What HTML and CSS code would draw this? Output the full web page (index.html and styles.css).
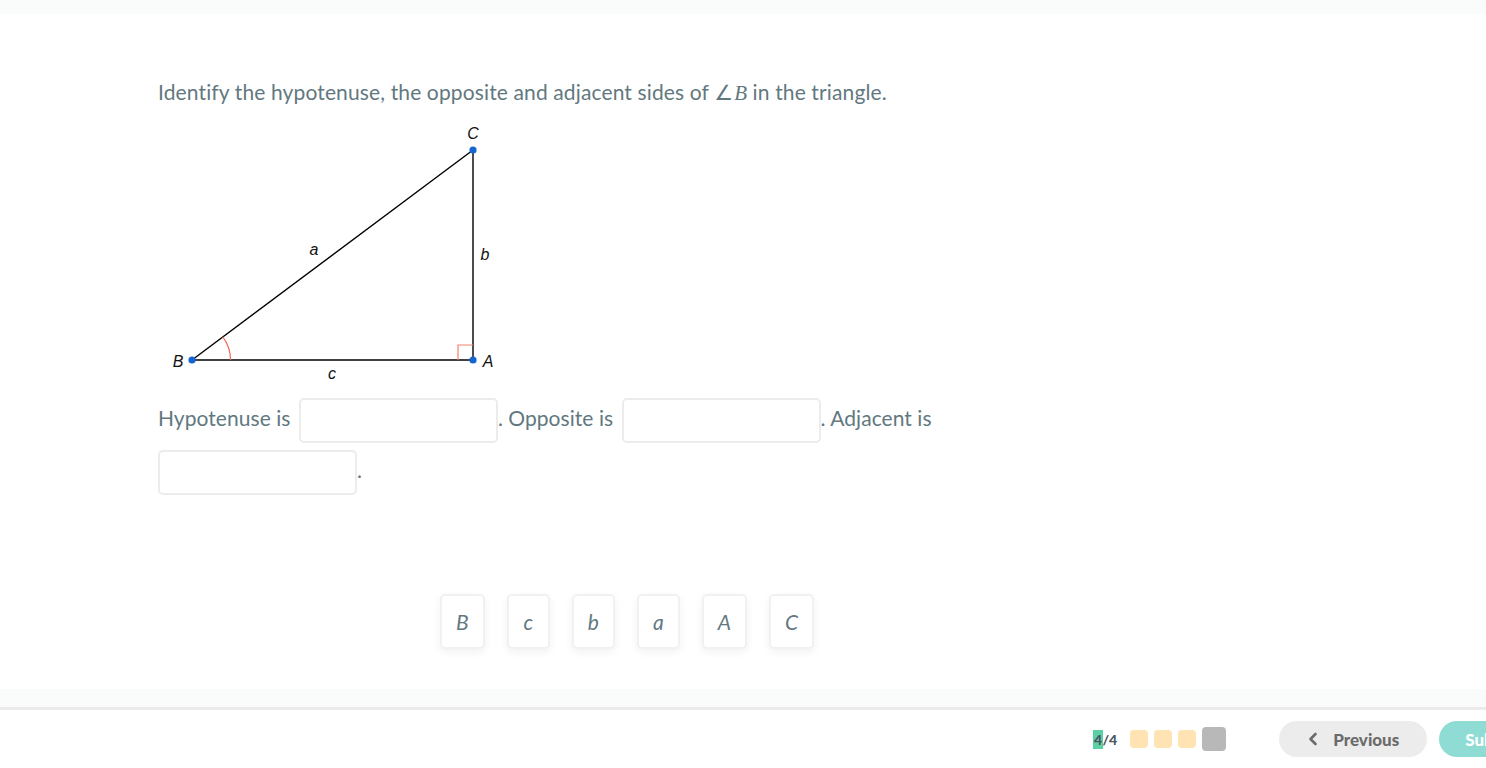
FILE: index.html
```html
<!DOCTYPE html>
<html>
<head>
<meta charset="utf-8">
<link rel="stylesheet" href="styles.css">
</head>
<body>
<div class="topbar"></div>
<main class="content">
  <p class="question">Identify the hypotenuse, the opposite and adjacent sides of <span class="math"><span class="angle">∠</span><i>B</i></span> in the triangle.</p>
  <svg class="triangle" width="360" height="262" viewBox="0 0 360 262">
    <line x1="34" y1="239" x2="315" y2="29" stroke="#000" stroke-width="1.4"/>
    <line x1="315" y1="29" x2="315" y2="239" stroke="#000" stroke-width="1.4"/>
    <line x1="34" y1="239" x2="315" y2="239" stroke="#000" stroke-width="1.4"/>
    <path d="M72.5 239 A38.5 38.5 0 0 0 64.8 215.9" fill="none" stroke="#f26b5b" stroke-width="1.2"/>
    <path d="M300 239 V224 H315" fill="none" stroke="#f5826e" stroke-width="1.2"/>
    <circle cx="34" cy="239" r="3.6" fill="#1565d0"/>
    <circle cx="315" cy="239" r="3.6" fill="#1565d0"/>
    <circle cx="315" cy="29" r="3.6" fill="#1565d0"/>
    <g class="lbl">
      <text x="315" y="18" text-anchor="middle">C</text>
      <text x="156" y="134" text-anchor="middle">a</text>
      <text x="327" y="139" text-anchor="middle">b</text>
      <text x="20" y="246" text-anchor="middle">B</text>
      <text x="330" y="246" text-anchor="middle">A</text>
      <text x="174" y="258" text-anchor="middle">c</text>
    </g>
  </svg>
  <p class="answer">Hypotenuse is <span class="blank"></span>. Opposite is <span class="blank"></span>. Adjacent is <span class="blank wrap"></span>.</p>
  <div class="choices">
    <div class="tile">B</div>
    <div class="tile">c</div>
    <div class="tile">b</div>
    <div class="tile">a</div>
    <div class="tile">A</div>
    <div class="tile">C</div>
  </div>
</main>
<div class="band"></div>
<footer class="footer">
  <div class="progress">
    <span class="count"><span class="cur">4</span>/4</span>
    <span class="dot"></span>
    <span class="dot"></span>
    <span class="dot"></span>
    <span class="dot current"></span>
  </div>
  <button class="btn prev"><svg width="12" height="14" viewBox="0 0 12 14"><path d="M8.5 2 L3.5 7 L8.5 12" fill="none" stroke="#6b6b6b" stroke-width="2.6" stroke-linecap="round" stroke-linejoin="round"/></svg>Previous</button>
  <button class="btn submit">Submit</button>
</footer>
</body>
</html>
```
FILE: styles.css
```css
html, body {
  margin: 0;
  padding: 0;
  background: #fff;
  overflow: hidden;
  height: 768px;
  font-family: Lato, "Open Sans", sans-serif;
}
.topbar {
  height: 14px;
  background: #f9fcfb;
}
.content {
  height: 675px;
  padding: 64px 0 0 158px;
  box-sizing: border-box;
  color: #62787f;
}
.question {
  margin: 0;
  font-size: 21px;
  line-height: 28px;
  letter-spacing: 0.13px;
}
.math i {
  font-family: "Liberation Serif", serif;
  font-style: italic;
  margin-left: 1px;
}
.angle {
  font-family: "DejaVu Sans", sans-serif;
  font-size: 21px;
}
.triangle {
  display: block;
  margin-top: 14px;
}
.lbl text {
  font-family: "Liberation Sans", Arial, sans-serif;
  font-style: italic;
  font-size: 16px;
  fill: #111;
}
.answer {
  margin: 9px 0 0 0;
  font-size: 21px;
  line-height: 52px;
  width: 800px;
  letter-spacing: 0.05px;
}
.blank {
  display: inline-block;
  width: 195px;
  height: 41px;
  border: 2px solid #ececec;
  border-radius: 5px;
  vertical-align: middle;
  margin: 0 0 0 3px;
  background: #fff;
}
.blank.wrap { margin-left: 0; }
.choices {
  display: flex;
  gap: 22px;
  margin: 98px 0 0 282px;
}
.tile {
  height: 51px;
  padding: 0 14px;
  min-width: 11px;
  border: 2px solid #f1f1f1;
  border-radius: 5px;
  box-shadow: 0 3px 8px rgba(0,0,0,0.06);
  display: flex;
  align-items: center;
  justify-content: center;
  font-style: italic;
  font-size: 21px;
  color: #62787f;
  background: #fff;
}
.band {
  height: 18px;
  background: #f9fcfb;
  border-bottom: 3px solid #ebebeb;
}
.footer {
  height: 58px;
  display: flex;
  align-items: center;
  justify-content: flex-end;
  margin-right: -59px;
}
.progress {
  display: flex;
  align-items: center;
  gap: 6px;
  margin-right: 53px;
}
.count {
  font-weight: 900;
  font-size: 14px;
  color: #4a5560;
  margin-right: 7px;
}
.cur {
  background: #5cd0a5;
  display: inline-block;
  line-height: 19px;
  padding: 0 0.5px;
}
.dot {
  width: 18px;
  height: 18px;
  border-radius: 4px;
  background: #ffe3b2;
}
.dot.current {
  width: 24px;
  height: 24px;
  background: #b8b8b8;
}
.btn {
  height: 36px;
  border: none;
  border-radius: 18px;
  font-family: Lato, sans-serif;
  font-weight: 900;
  font-size: 17px;
  display: flex;
  align-items: center;
  justify-content: center;
}
.prev {
  width: 148px;
  background: #ececec;
  color: #6b6b6b;
  gap: 14px;
  margin-right: 12px;
}
.submit {
  padding: 0 26px;
  background: #8fdcd4;
  color: #fff;
}
```
